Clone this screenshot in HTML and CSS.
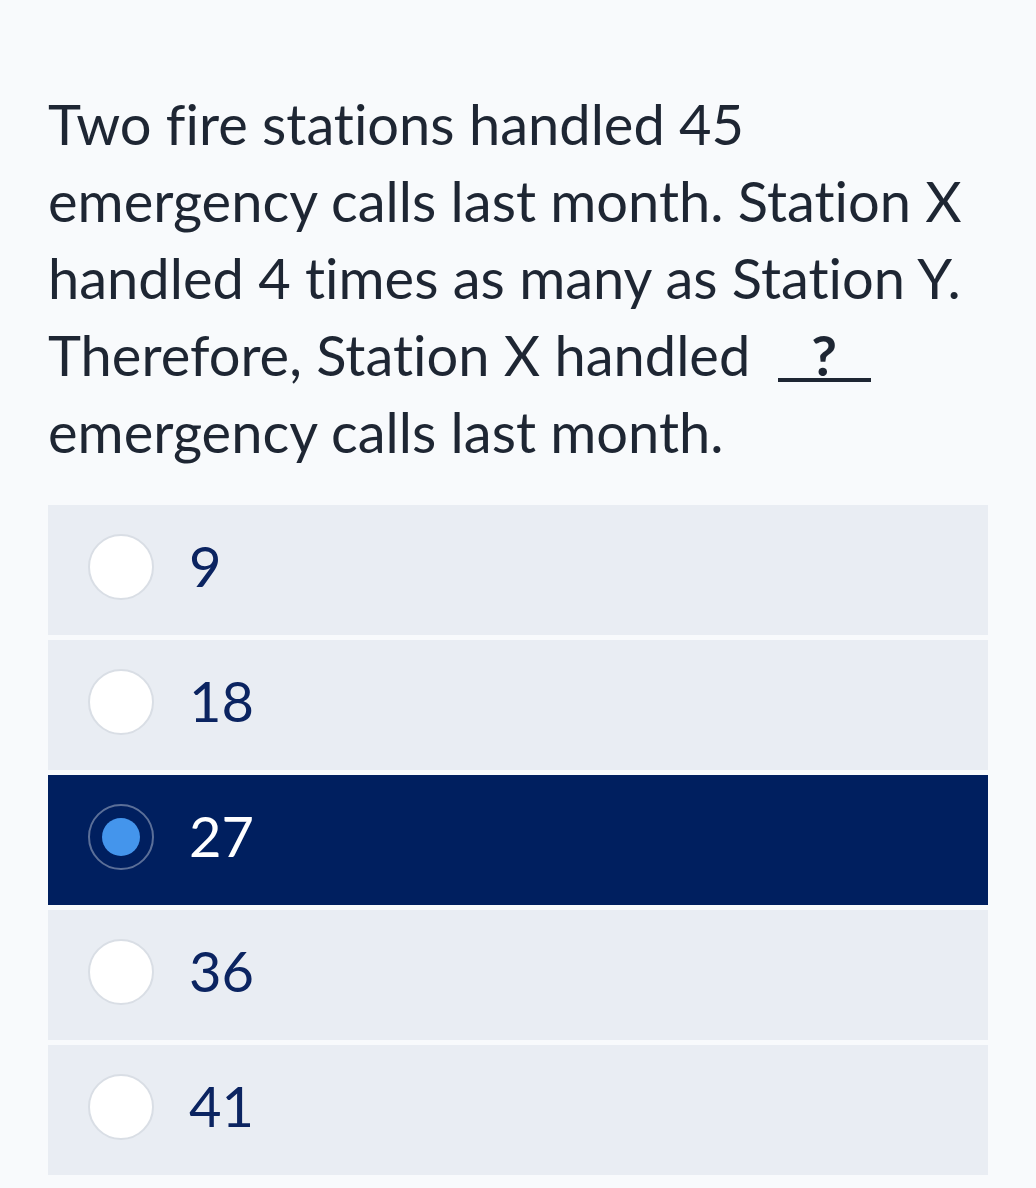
FILE: index.html
```html
<!DOCTYPE html>
<html lang="en">
<head>
<meta charset="utf-8">
<title>Question</title>
<link rel="stylesheet" href="styles.css">
</head>
<body>
<main class="page">
  <p class="question">Two fire stations handled 45 emergency calls last month. Station X handled 4 times as many as Station Y. Therefore, Station X handled <span class="blank">?</span> emergency calls last month.</p>
  <ul class="options">
    <li class="option"><span class="radio"></span><span class="label">9</span></li>
    <li class="option"><span class="radio"></span><span class="label">18</span></li>
    <li class="option selected"><span class="radio"></span><span class="label">27</span></li>
    <li class="option"><span class="radio"></span><span class="label">36</span></li>
    <li class="option"><span class="radio"></span><span class="label">41</span></li>
  </ul>
</main>
</body>
</html>
```
FILE: styles.css
```css
html, body {
  margin: 0;
  padding: 0;
  background: #f8fafc;
}
body {
  font-family: Lato, "Noto Sans", sans-serif;
  font-variant-ligatures: no-common-ligatures;
  color: #1e2633;
}
.page {
  padding: 85px 48px 0 48px;
}
.question {
  margin: 0;
  font-size: 56px;
  line-height: 77px;
  width: 940px;
}
.blank {
  display: inline-block;
  width: 93px;
  margin-left: 13px;
  text-align: center;
  font-weight: 700;
  line-height: 47px;
  border-bottom: 4px solid #1e2633;
}
.options {
  list-style: none;
  margin: 35px 0 0 0;
  padding: 0;
  display: flex;
  flex-direction: column;
  gap: 5px;
  width: 940px;
}
.option {
  height: 130px;
  box-sizing: border-box;
  background: #e9edf3;
  display: flex;
  align-items: center;
  padding: 0 0 6px 40px;
  gap: 35px;
}
.radio {
  width: 66px;
  height: 66px;
  box-sizing: border-box;
  border-radius: 50%;
  background: #ffffff;
  border: 2px solid #d9dee5;
  display: flex;
  align-items: center;
  justify-content: center;
  flex: none;
}
.label {
  font-size: 56px;
  line-height: 66px;
  color: #0b2461;
  margin-bottom: 2px;
}
.option.selected {
  background: #001f5f;
}
.option.selected .radio {
  background: transparent;
  border: 2px solid #5b6f98;
}
.option.selected .radio::after {
  content: "";
  width: 38px;
  height: 38px;
  border-radius: 50%;
  background: #4495ec;
}
.option.selected .label {
  color: #ffffff;
}
```
